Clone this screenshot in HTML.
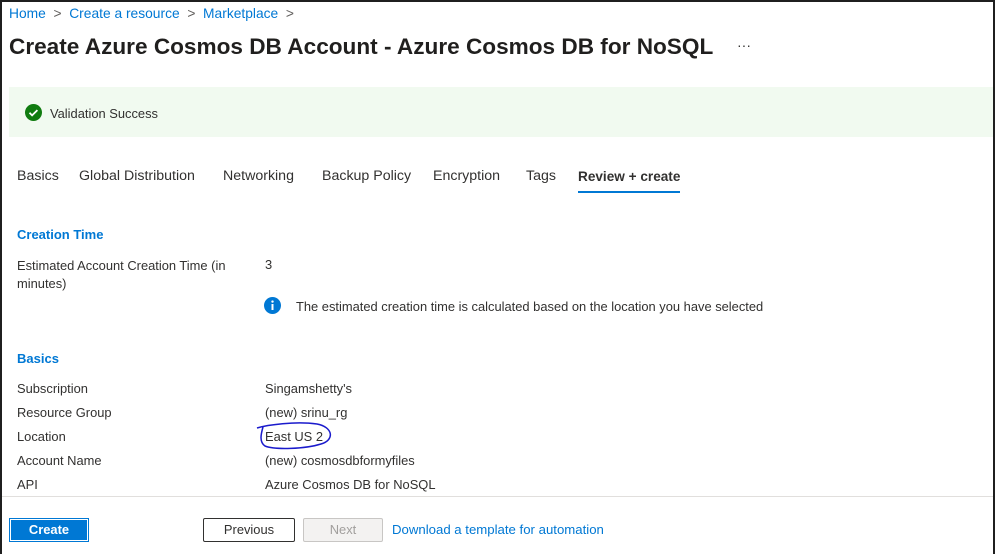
<!DOCTYPE html>
<html><head><style>
body{margin:0;width:995px;height:554px;overflow:hidden;background:#fff;font-family:"Liberation Sans",sans-serif;color:#323130;position:relative}
.a{position:absolute;white-space:nowrap}
.f{font-size:12.9px}
.lnk{color:#0078d4}
.h{color:#0078d4;font-weight:bold;font-size:13px}
.tab{font-size:14.2px;top:168px}
</style></head><body>
<div class="a" style="left:0;top:0;width:995px;height:2px;background:#1f1f1f"></div>
<div class="a" style="left:0;top:0;width:2px;height:554px;background:#1f1f1f"></div>
<div class="a" style="right:0;top:0;width:2px;height:554px;background:#1f1f1f"></div>

<div class="a lnk" style="left:9px;top:6px;font-size:13.8px">Home <span style="color:#605e5c">&nbsp;&gt;&nbsp;</span> Create a resource <span style="color:#605e5c">&nbsp;&gt;&nbsp;</span> Marketplace <span style="color:#605e5c">&nbsp;&gt;</span></div>
<div class="a" style="left:9px;top:34px;font-size:22.6px;font-weight:bold;color:#201f1e">Create Azure Cosmos DB Account - Azure Cosmos DB for NoSQL</div>
<div class="a" style="left:737px;top:37px;font-size:14px">···</div>

<div class="a" style="left:9px;top:87px;width:984px;height:50px;background:#f1faf0"></div>
<svg class="a" style="left:25px;top:104px" width="17" height="17" viewBox="0 0 17 17"><circle cx="8.5" cy="8.5" r="8.5" fill="#107c10"/><path d="M4.5 8.8l2.6 2.6 5.3-5.3" stroke="#fff" stroke-width="1.8" fill="none"/></svg>
<div class="a f" style="left:50px;top:106px;color:#323130">Validation Success</div>

<div class="a tab" style="left:17px">Basics</div>
<div class="a tab" style="left:79px">Global Distribution</div>
<div class="a tab" style="left:223px">Networking</div>
<div class="a tab" style="left:322px">Backup Policy</div>
<div class="a tab" style="left:433px">Encryption</div>
<div class="a tab" style="left:526px">Tags</div>
<div class="a tab" style="left:578px;font-weight:bold;font-size:13.6px;top:169px">Review + create</div>
<div class="a" style="left:578px;top:191px;width:102px;height:2px;background:#0078d4"></div>

<div class="a h" style="left:17px;top:227px">Creation Time</div>
<div class="a f" style="left:17px;top:257px;line-height:18px;white-space:normal;width:230px">Estimated Account Creation Time (in minutes)</div>
<div class="a f" style="left:265px;top:257px">3</div>
<svg class="a" style="left:264px;top:297px" width="17" height="17" viewBox="0 0 17 17"><circle cx="8.5" cy="8.5" r="8.5" fill="#0078d4"/><rect x="7.5" y="7" width="2" height="6" fill="#fff"/><circle cx="8.5" cy="4.6" r="1.2" fill="#fff"/></svg>
<div class="a f" style="left:296px;top:299px">The estimated creation time is calculated based on the location you have selected</div>

<div class="a h" style="left:17px;top:351px">Basics</div>
<div class="a f" style="left:17px;top:381px">Subscription</div>
<div class="a f" style="left:265px;top:381px">Singamshetty's</div>
<div class="a f" style="left:17px;top:405px">Resource Group</div>
<div class="a f" style="left:265px;top:405px">(new) srinu_rg</div>
<div class="a f" style="left:17px;top:429px">Location</div>
<div class="a f" style="left:265px;top:429px">East US 2</div>
<svg class="a" style="left:255px;top:422px" width="80" height="30" viewBox="0 0 80 30"><path d="M2 6 C12 3 40 -1 62 2 C78 5 80 18 66 22 C50 27 20 28 10 24 C4 20 6 12 8 5" stroke="#1a1acc" stroke-width="1.5" fill="none"/></svg>
<div class="a f" style="left:17px;top:453px">Account Name</div>
<div class="a f" style="left:265px;top:453px">(new) cosmosdbformyfiles</div>
<div class="a f" style="left:17px;top:477px">API</div>
<div class="a f" style="left:265px;top:477px">Azure Cosmos DB for NoSQL</div>

<div class="a" style="left:2px;top:496px;width:991px;height:58px;background:#fff;border-top:1px solid #e1dfdd"></div>
<div class="a" style="left:9px;top:518px;width:78px;height:22px;background:#0078d4;border:1px solid #0078d4;box-shadow:inset 0 0 0 1px #fff;color:#fff;font-size:12.9px;font-weight:bold;text-align:center;line-height:22px">Create</div>
<div class="a" style="left:203px;top:518px;width:90px;height:22px;border:1px solid #323130;border-radius:2px;font-size:12.9px;text-align:center;line-height:22px">Previous</div>
<div class="a" style="left:303px;top:518px;width:78px;height:22px;border:1px solid #c8c6c4;background:#f3f2f1;color:#a19f9d;border-radius:2px;font-size:12.9px;text-align:center;line-height:22px">Next</div>
<div class="a lnk" style="left:392px;top:522px;font-size:13.2px">Download a template for automation</div>
</body></html>
